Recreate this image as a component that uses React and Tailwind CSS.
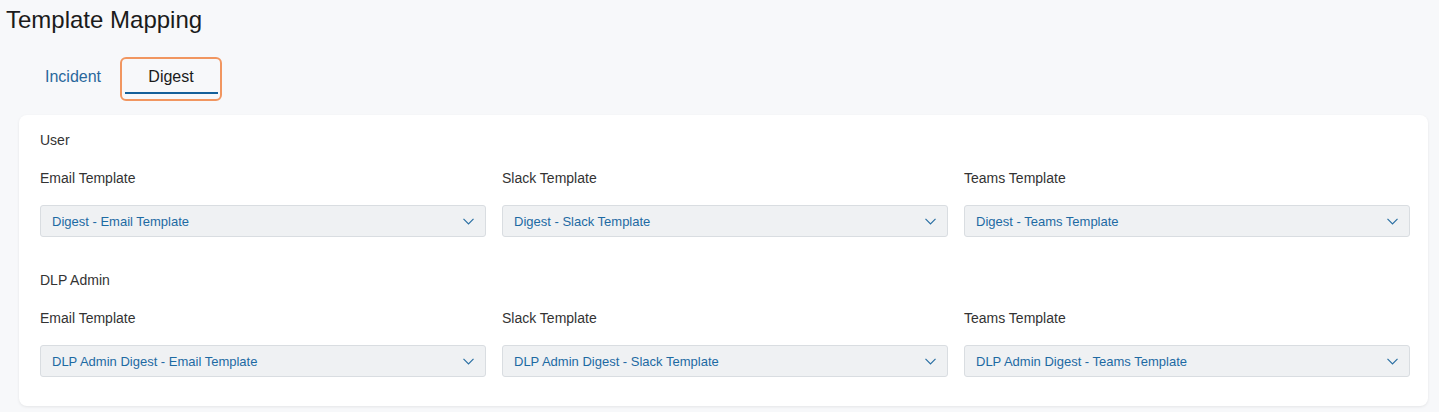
import React, { useState } from "react";

const SECTIONS = [
  {
    title: "User",
    fields: [
      { label: "Email Template", value: "Digest - Email Template" },
      { label: "Slack Template", value: "Digest - Slack Template" },
      { label: "Teams Template", value: "Digest - Teams Template" },
    ],
  },
  {
    title: "DLP Admin",
    fields: [
      { label: "Email Template", value: "DLP Admin Digest - Email Template" },
      { label: "Slack Template", value: "DLP Admin Digest - Slack Template" },
      { label: "Teams Template", value: "DLP Admin Digest - Teams Template" },
    ],
  },
];

function Chevron() {
  return (
    <svg width="11" height="7" viewBox="0 0 11 7" fill="none">
      <path d="M0.5 0.8 L5.5 5.8 L10.5 0.8" stroke="#2a6fa3" strokeWidth="1.2" />
    </svg>
  );
}

function SelectBox({ label, value }) {
  return (
    <div className="flex flex-col">
      <label className="text-[14px] text-[#333] leading-[18px]">{label}</label>
      <div className="mt-[18px] h-[32px] flex items-center justify-between pl-[11px] pr-[11px] bg-[#eff1f3] border border-[#d9dde1] rounded-[3px] cursor-pointer">
        <span className="text-[13px] text-[#1d6aa3] pt-[2px]">{value}</span>
        <Chevron />
      </div>
    </div>
  );
}

export default function App() {
  const [tab, setTab] = useState("digest");

  return (
    <div className="min-h-screen bg-[#f7f8fa] pb-[5px]" style={{ fontFamily: "'Liberation Sans', Arial, sans-serif" }}>
      <h1 className="pl-[6px] pt-[6px] text-[24px] leading-[28px] text-[#1b1b1b]">Template Mapping</h1>

      {/* Tabs */}
      <div className="flex items-start pl-[26px] mt-[23px] h-[44px]">
        <button
          onClick={() => setTab("incident")}
          className="px-[19px] pt-[11px] text-[16px] leading-[18px] text-[#29679c]">
          Incident
        </button>
        <button
          onClick={() => setTab("digest")}
          className="w-[102px] h-[44px] rounded-[6px] border-2 border-[#f19660] flex flex-col items-center justify-start pt-[9px]">
          <span className="text-[16px] text-[#1b1b1b] leading-[18px]">Digest</span>
          <span className="mt-[6px] w-[93px] h-[2px] bg-[#14609a]" />
        </button>
      </div>

      {/* Card */}
      <div className="mt-[14px] ml-[19px] mr-[11px] bg-white rounded-[8px] shadow-[0_1px_3px_rgba(0,0,0,0.08)] pl-[21px] pr-[18px] pt-[16px] pb-[29px]">
        {SECTIONS.map((s, i) => (
          <div key={s.title} className={i > 0 ? "mt-[34px]" : ""}>
            <div className="text-[14px] text-[#333] leading-[18px]">{s.title}</div>
            <div className="grid grid-cols-3 gap-[16px] mt-[20px]">
              {s.fields.map(f => (
                <SelectBox key={f.label} label={f.label} value={f.value} />
              ))}
            </div>
          </div>
        ))}
      </div>
    </div>
  );
}
